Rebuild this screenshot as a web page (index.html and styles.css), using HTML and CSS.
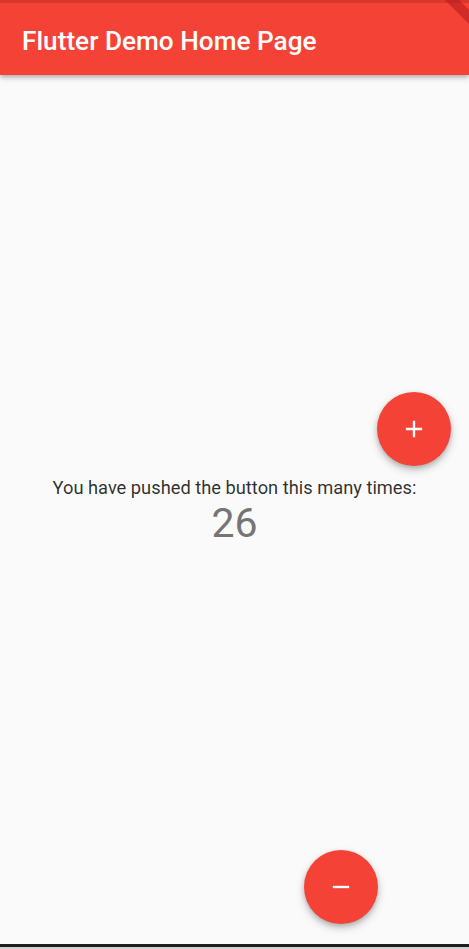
FILE: index.html
```html
<!DOCTYPE html>
<html>
<head>
<meta charset="utf-8">
<link rel="stylesheet" href="styles.css">
</head>
<body>
<div class="screen">
  <header class="appbar">
    <div class="status"></div>
    <h1 class="title">Flutter Demo Home Page</h1>
    <div class="banner"></div>
  </header>
  <main class="body">
    <button class="fab fab-plus" aria-label="Increment">
      <svg width="24" height="24" viewBox="0 0 24 24"><path d="M19 13h-6v6h-2v-6H5v-2h6V5h2v6h6v2z" fill="#fff"/></svg>
    </button>
    <div class="center">
      <p class="label">You have pushed the button this many times:</p>
      <p class="count">26</p>
    </div>
    <button class="fab fab-minus" aria-label="Decrement">
      <svg width="24" height="24" viewBox="0 0 24 24"><path d="M19 13H5v-2h14v2z" fill="#fff"/></svg>
    </button>
  </main>
  <div class="bottom-edge"></div>
</div>
</body>
</html>
```
FILE: styles.css
```css
html, body {
  margin: 0;
  padding: 0;
  background: #fafafa;
}
.screen {
  width: 469px;
  height: 949px;
  display: flex;
  flex-direction: column;
  overflow: hidden;
  font-family: Roboto, "Noto Sans", sans-serif;
  position: relative;
}
.appbar {
  height: 75px;
  background: #f44336;
  position: relative;
  z-index: 2;
  box-shadow: 0 2px 4px rgba(0,0,0,0.22), 0 4px 6px rgba(0,0,0,0.1);
  display: flex;
  flex-direction: column;
  overflow: hidden;
}
.status {
  height: 3px;
  background: #d9362c;
}
.title {
  margin: 0;
  padding: 23px 0 0 22px;
  color: #fff;
  font-size: 26.2px;
  font-weight: 500;
  line-height: 30px;
}
.banner {
  position: absolute;
  top: 2px;
  right: -30px;
  width: 80px;
  height: 10px;
  background: #b71c1c;
  transform: rotate(45deg);
  opacity: 0.6;
}
.body {
  flex: 1;
  position: relative;
  display: flex;
  flex-direction: column;
}
.center {
  position: absolute;
  left: 0;
  right: 0;
  top: 400px;
  text-align: center;
}
.label {
  margin: 0;
  font-size: 18.3px;
  line-height: 26px;
  color: rgba(0,0,0,0.82);
}
.count {
  margin: 0;
  font-size: 41px;
  line-height: 45px;
  color: #757575;
}
.fab {
  position: absolute;
  width: 74px;
  height: 74px;
  border-radius: 50%;
  border: none;
  background: #f44336;
  box-shadow: 0 4px 8px rgba(0,0,0,0.22), 0 2px 4px rgba(0,0,0,0.14);
  display: flex;
  align-items: center;
  justify-content: center;
  padding: 0;
}
.fab svg {
  width: 28px;
  height: 28px;
}
.fab-plus {
  left: 377px;
  top: 317px;
}
.fab-minus {
  left: 304px;
  top: 775px;
}
.bottom-edge {
  height: 3px;
  background: #1e1e1e;
  margin-bottom: 2px;
  box-shadow: 0 2px 0 #cfcfcf;
}
```
